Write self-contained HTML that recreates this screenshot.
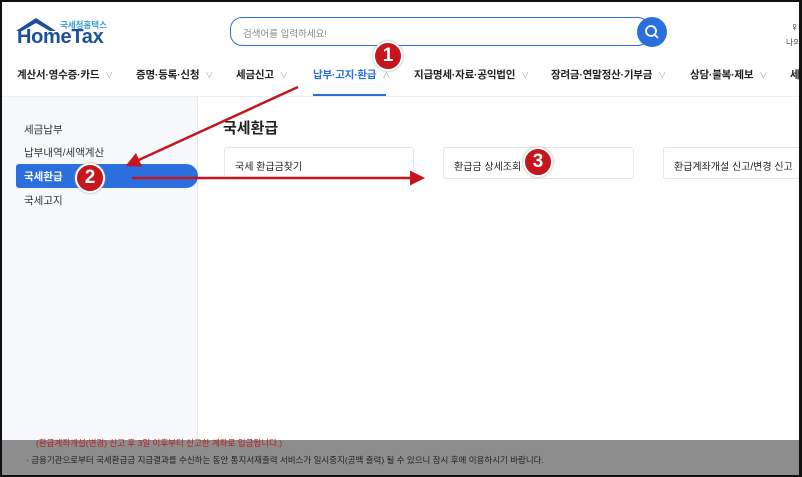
<!DOCTYPE html>
<html><head><meta charset="utf-8"><style>
*{margin:0;padding:0;box-sizing:border-box}
body{width:802px;height:477px;overflow:hidden;background:#fff;font-family:"Liberation Sans","Noto Sans CJK KR",sans-serif;position:relative;color:#222}
.frame{position:absolute;inset:0;border:2px solid #111;border-right:3px solid #111;z-index:50;pointer-events:none}
.abs{position:absolute}
.nav{position:absolute;top:67px;font-size:10.5px;font-weight:bold;color:#222;white-space:nowrap;letter-spacing:-0.2px}
.nav span{font-weight:normal;color:#aaa;font-size:8px;margin-left:6px}
.side{position:absolute;left:2px;top:97px;width:196px;height:380px;background:#f7f8fb;border-right:1px solid #e6e8ee}
.si{position:absolute;left:24px;font-size:10.5px;color:#333}
.card{position:absolute;top:147px;height:32px;border:1px solid #e3e6ec;border-radius:3px;background:#fff;font-size:10px;padding:10px 0 0 10px;color:#222}
.badge{position:absolute;width:30px;height:30px;border-radius:50%;background:#c5161d;border:2px solid #fff;box-shadow:0 0 2px #999;color:#fff;font-weight:bold;font-size:19px;text-align:center;line-height:26px}
</style></head><body>
<!-- logo -->
<svg class="abs" style="left:15px;top:17px" width="42" height="16" viewBox="0 0 42 16"><path d="M1 14 L21 1 L41 14 L35 14 L21 6 L7 14Z" fill="#1b4f9c"/></svg>
<div class="abs" style="left:60px;top:19px;font-size:8.5px;color:#3aa0d8;font-weight:bold">국세청홈택스</div>
<div class="abs" style="left:17px;top:27px;font-size:20px;line-height:20px;font-weight:bold;color:#1b4f9c;letter-spacing:-0.3px">HomeTax</div>
<!-- search -->
<div class="abs" style="left:230px;top:17px;width:420px;height:29px;border:1.5px solid #2f6ee0;border-radius:12px"></div>
<div class="abs" style="left:243px;top:26px;font-size:9.5px;color:#888">검색어를 입력하세요!</div>
<div class="abs" style="left:637px;top:17px;width:30px;height:30px;border-radius:50%;background:#2b6fdf"></div>
<svg class="abs" style="left:643px;top:23px" width="18" height="18"><circle cx="8" cy="8" r="5" stroke="#fff" stroke-width="1.8" fill="none"/><line x1="12" y1="12" x2="15" y2="15" stroke="#fff" stroke-width="1.8"/></svg>
<div class="abs" style="left:790px;top:20px;font-size:12px">♀</div>
<div class="abs" style="left:786px;top:37px;font-size:8px;color:#444">나의</div>
<!-- nav -->
<div class="nav" style="left:17px">계산서·영수증·카드<span>∨</span></div>
<div class="nav" style="left:136px">증명·등록·신청<span>∨</span></div>
<div class="nav" style="left:236px">세금신고<span>∨</span></div>
<div class="nav" style="left:313px;color:#2b6fdf">납부·고지·환급<span>∧</span></div>
<div class="abs" style="left:313px;top:94px;width:73px;height:3px;background:#2b6fdf"></div>
<div class="nav" style="left:414px">지급명세·자료·공익법인<span>∨</span></div>
<div class="nav" style="left:551px">장려금·연말정산·기부금<span>∨</span></div>
<div class="nav" style="left:690px">상담·불복·제보<span>∨</span></div>
<div class="nav" style="left:790px">세</div>
<div class="abs" style="left:0;top:96px;width:802px;height:1px;background:#eceef2"></div>
<!-- sidebar -->
<div class="side"></div>
<div class="si" style="top:122px">세금납부</div>
<div class="si" style="top:145px">납부내역/세액계산</div>
<div class="abs" style="left:16px;top:164px;width:182px;height:24px;background:#2b6fdf;border-radius:3px 12px 12px 3px"></div>
<div class="si" style="top:169px;color:#fff;font-weight:bold">국세환급</div>
<div class="si" style="top:193px">국세고지</div>
<!-- content -->
<div class="abs" style="left:223px;top:117px;font-size:15px;font-weight:bold;color:#222">국세환급</div>
<div class="card" style="left:224px;width:190px">국세 환급금찾기</div>
<div class="card" style="left:443px;width:191px">환급금 상세조회</div>
<div class="card" style="left:663px;width:140px">환급계좌개설 신고/변경 신고</div>
<!-- bottom overlay -->
<div class="abs" style="left:0;top:440px;width:802px;height:37px;background:#8d8d8d"></div>
<div class="abs" style="left:36px;top:437px;font-size:8.5px;color:#b02020">(환급계좌개설(변경) 신고 후 3일 이후부터 신고한 계좌로 입금됩니다.)</div>
<div class="abs" style="left:26px;top:454px;font-size:8.5px;color:#222">· 금융기관으로부터 국세환급금 지급결과를 수신하는 동안 통지서재출력 서비스가 일시중지(공백 출력) 될 수 있으니 잠시 후에 이용하시기 바랍니다.</div>
<!-- arrows -->
<svg class="abs" style="left:0;top:0;z-index:20" width="802" height="477">
<defs><marker id="ah" markerWidth="6" markerHeight="6" refX="4" refY="3" orient="auto" markerUnits="strokeWidth"><path d="M0,0 L6,3 L0,6Z" fill="#c5161d"/></marker></defs>
<line x1="298" y1="87" x2="130" y2="164" stroke="#c5161d" stroke-width="2.5" marker-end="url(#ah)"/>
<line x1="132" y1="178" x2="420" y2="178" stroke="#c5161d" stroke-width="2.5" marker-end="url(#ah)"/>
</svg>
<div class="badge" style="left:373px;top:41px;z-index:30">1</div>
<div class="badge" style="left:75px;top:163px;z-index:30">2</div>
<div class="badge" style="left:523px;top:147px;z-index:30">3</div>
<div class="frame"></div>
</body></html>
